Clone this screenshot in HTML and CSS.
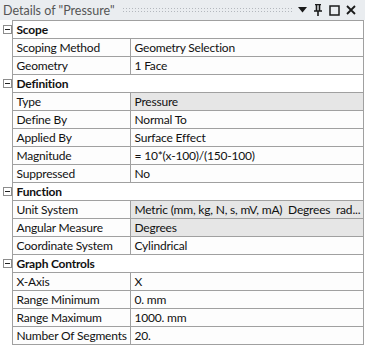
FILE: index.html
```html
<!DOCTYPE html>
<html lang="en">
<head>
<meta charset="UTF-8" />
<title>Details of "Pressure"</title>
<link rel="stylesheet" href="styles.css">
</head>
<body>

<div class="panel">
    <div class="titlebar">
        <span class="title">Details of "Pressure"</span>
        <span class="grip"></span>
        <span class="tools">
            <svg width="9" height="6" viewBox="0 0 9 6"><path d="M0 0 H9 L4.5 5.5 Z" fill="#1a1a1a"/></svg>
            <svg width="10" height="12" viewBox="0 0 10 12"><path d="M2 0.5 H8 M3.5 0.5 V7 M6.5 0.5 V7 M1 7 H9 M5 7 V12" stroke="#1a1a1a" stroke-width="1.6" fill="none"/></svg>
            <svg width="11" height="11" viewBox="0 0 11 11"><rect x="1" y="1" width="9" height="9" stroke="#1a1a1a" stroke-width="1.5" fill="none"/></svg>
            <svg width="10" height="10" viewBox="0 0 10 10"><path d="M1 1 L9 9 M9 1 L1 9" stroke="#1a1a1a" stroke-width="1.8"/></svg>
        </span>
    </div>

    <table class="grid">
        <colgroup>
            <col class="col-exp">
            <col class="col-name">
            <col class="col-value">
        </colgroup>
        <tr class="group"><td class="exp"><span class="minus"></span></td><td colspan="2">Scope</td></tr>
        <tr><td class="exp"></td><td>Scoping Method</td><td>Geometry Selection</td></tr>
        <tr><td class="exp"></td><td>Geometry</td><td>1 Face</td></tr>

        <tr class="group"><td class="exp"><span class="minus"></span></td><td colspan="2">Definition</td></tr>
        <tr><td class="exp"></td><td>Type</td><td class="ro">Pressure</td></tr>
        <tr><td class="exp"></td><td>Define By</td><td>Normal To</td></tr>
        <tr><td class="exp"></td><td>Applied By</td><td>Surface Effect</td></tr>
        <tr><td class="exp"></td><td>Magnitude</td><td>= 10*(x-100)/(150-100)</td></tr>
        <tr><td class="exp"></td><td>Suppressed</td><td>No</td></tr>

        <tr class="group"><td class="exp"><span class="minus"></span></td><td colspan="2">Function</td></tr>
        <tr><td class="exp"></td><td>Unit System</td><td class="ro">Metric (mm, kg, N, s, mV, mA)&nbsp; Degrees&nbsp; rad...</td></tr>
        <tr><td class="exp"></td><td>Angular Measure</td><td class="ro">Degrees</td></tr>
        <tr><td class="exp"></td><td>Coordinate System</td><td>Cylindrical</td></tr>

        <tr class="group"><td class="exp"><span class="minus"></span></td><td colspan="2">Graph Controls</td></tr>
        <tr><td class="exp"></td><td>X-Axis</td><td>X</td></tr>
        <tr><td class="exp"></td><td>Range Minimum</td><td>0. mm</td></tr>
        <tr><td class="exp"></td><td>Range Maximum</td><td>1000. mm</td></tr>
        <tr><td class="exp"></td><td>Number Of Segments</td><td>20.</td></tr>
    </table>
</div>

</body>
</html>
```

FILE: styles.css
```css
body {
  margin: 0;
  background-color: #ffffff;
  font-family: Lato, 'Noto Sans', sans-serif;
  font-size: 12px;
  letter-spacing: -0.2px;
  color: #111;
}
.panel {
  width: 365px;
}
.titlebar {
  display: flex;
  align-items: center;
  height: 20px;
  background-color: #eaedf0;
  padding: 0 9px 0 3px;
  box-sizing: border-box;
}
.title {
  color: #555;
  font-size: 12.5px;
  letter-spacing: 0;
  white-space: nowrap;
}
.grip {
  flex: 1;
  height: 6px;
  margin: 0 5px 0 7px;
  background-image: radial-gradient(circle, #b4b8be 0.7px, transparent 0.9px);
  background-size: 3px 3px;
}
.tools {
  display: flex;
  align-items: center;
  gap: 6px;
}
.grid {
  border-collapse: collapse;
  table-layout: fixed;
  width: 364px;
}
.col-exp {
  width: 12px;
}
.col-name {
  width: 118px;
}
.grid td {
  height: 17px;
  padding: 0 0 0 4px;
  border: 1px solid #a0a0a0;
  white-space: nowrap;
  overflow: hidden;
  line-height: 17px;
  background-color: #fdfdfd;
}
.grid td.exp {
  border: none;
  border-right: 1px solid #a0a0a0;
  background-color: #ffffff;
  padding: 0;
  position: relative;
}
.grid td.ro {
  background-color: #e6e6e6;
}
.group td {
  font-weight: 700;
  background-color: #ffffff;
}
.minus {
  position: absolute;
  left: 3px;
  top: 4px;
  width: 7px;
  height: 7px;
  border: 1px solid #8c8c8c;
  background-color: #fff;
}
.minus::after {
  content: "";
  position: absolute;
  left: 1px;
  top: 3px;
  width: 5px;
  height: 1px;
  background-color: #222;
}
```
